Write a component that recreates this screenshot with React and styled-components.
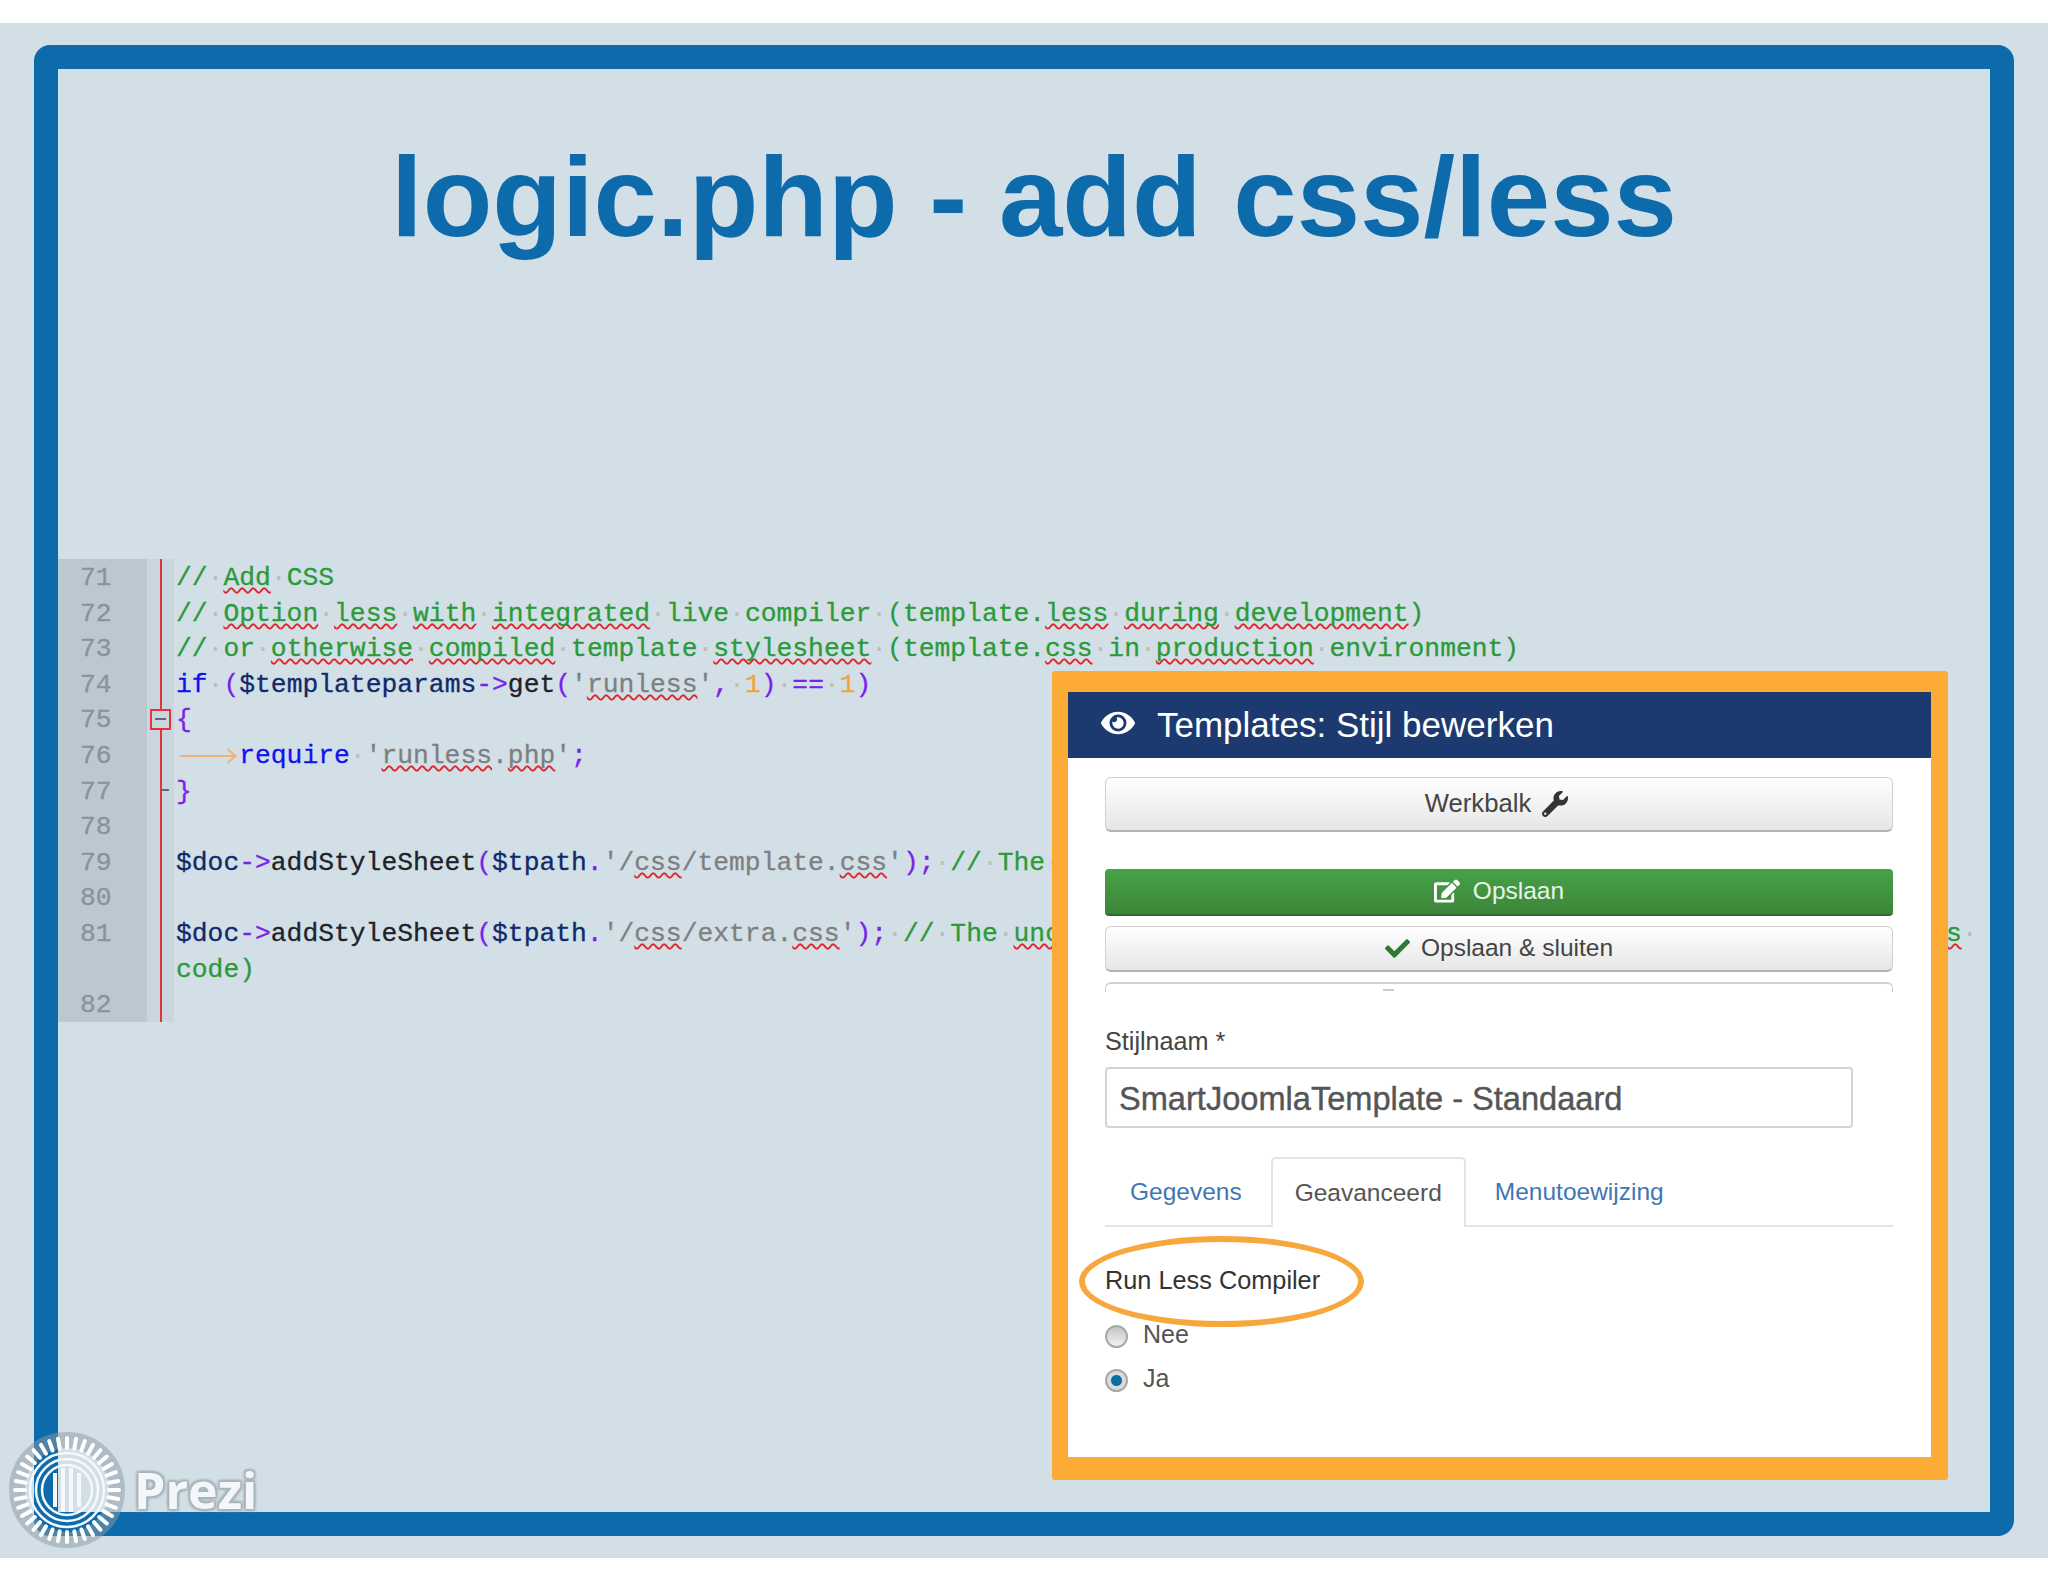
import styled, { createGlobalStyle } from "styled-components";
import { FaEye, FaWrench, FaEdit, FaCheck } from "react-icons/fa";

const Global = createGlobalStyle`
  html, body { margin: 0; padding: 0; background: #fff; }
  body { font-family: "Liberation Sans", Arial, sans-serif; }
`;

const Page = styled.div`
  width: 2048px;
  height: 1582px;
  padding-top: 23px;
  box-sizing: border-box;
`;
const Slide = styled.div`
  position: relative;
  height: 1535px;
  padding: 22px 34px;
  box-sizing: border-box;
  background: #d2dfe7;
`;
const Frame = styled.div`
  position: relative;
  height: 1491px;
  box-sizing: border-box;
  border: 24px solid #0e6bab;
  border-radius: 16px;
  display: flex;
  flex-direction: column;
`;
const TitleArea = styled.div`
  height: 490px;
  padding: 71px 0 0 20px;
  box-sizing: border-box;
  text-align: center;
`;
const Title = styled.h1`
  margin: 0;
  font-size: 114px;
  line-height: 1;
  font-weight: 700;
  color: #0e6bab;
`;

/* code editor */
const Code = styled.div`
  font-family: "Liberation Mono", "Courier New", monospace;
  font-size: 26.33px;
  line-height: 35.6px;
  -webkit-text-stroke: 0.3px currentColor;
`;
const Row = styled.div`
  display: flex;
  height: 35.6px;
  white-space: pre;
`;
const LineNo = styled.div`
  flex: 0 0 89px;
  padding: 2px 0 0 22px;
  box-sizing: border-box;
  background: #bcc8d0;
  color: #88939b;
`;
const Fold = styled.div`
  flex: 0 0 27px;
  display: flex;
  align-items: center;
  justify-content: flex-start;
  background: linear-gradient(90deg, #cad6de 13px, #e2343a 13px, #e2343a 15px, #cad6de 15px);
`;
const FoldBox = styled.div`
  width: 17px;
  height: 17px;
  margin-left: 3px;
  border: 2px solid #e2343a;
  display: flex;
  align-items: center;
  justify-content: center;
  background: #cad6de;
  &::before { content: ""; width: 11px; height: 2px; background: #667; }
`;
const FoldTick = styled.div`
  width: 7px;
  height: 2px;
  margin-left: 15px;
  background: #667;
`;
const Text = styled.div`
  padding: 2px 0 0 2px;
`;
const Part = styled.span`
  color: ${(p) => p.$color};
`;
const Typo = styled.span`
  text-decoration: underline wavy #e0262c;
  text-decoration-thickness: 1.5px;
  text-underline-offset: 2px;
  text-decoration-skip-ink: none;
`;
const Dot = styled.span`
  color: #bdbdb2;
  -webkit-text-stroke: 0;
`;
const TabArrow = styled.svg`
  width: 63.2px;
  height: 20px;
  vertical-align: -3px;
`;

/* overlaid screenshot */
const Panel = styled.div`
  position: absolute;
  left: 994px;
  top: 602px;
  width: 896px;
  height: 809px;
  box-sizing: border-box;
  border-style: solid;
  border-color: #fdab37;
  border-width: 21px 17px 23px 16px;
  border-radius: 3px;
  background: #fff;
  color: #444;
`;
const Header = styled.div`
  height: 66px;
  display: flex;
  align-items: center;
  gap: 22px;
  padding-left: 33px;
  background: #1d3a70;
  color: #fff;
  font-size: 35px;
  svg { margin-top: -4px; }
`;
const Body = styled.div`
  padding: 19px 38px 0 37px;
  display: flex;
  flex-direction: column;
`;
const Button = styled.div`
  height: ${(p) => p.$h}px;
  margin-bottom: ${(p) => p.$mb}px;
  padding-right: ${(p) => p.$pr || 0}px;
  padding-bottom: 1px;
  display: flex;
  align-items: center;
  justify-content: center;
  gap: ${(p) => p.$gap || 8}px;
  box-sizing: border-box;
  border: 1px solid #d0d0d0;
  border-bottom: 2px solid #b3b3b3;
  border-radius: 6px;
  background: linear-gradient(#fff, #e6e6e6);
  color: #444;
  font-size: ${(p) => p.$fs || 24.5}px;
`;
const GreenButton = styled(Button)`
  border: 0;
  border-bottom: 2px solid #2e6e2d;
  border-radius: 4px;
  background: linear-gradient(#48a248, #3b8539);
  color: #e9f3e9;
`;
const ClippedButton = styled.div`
  height: 10px;
  border: 1px solid #d0d0d0;
  border-bottom: 0;
  border-top-width: 2px;
  box-sizing: border-box;
  border-radius: 6px 6px 0 0;
  position: relative;
  &::after {
    content: "";
    position: absolute;
    left: 277px;
    top: 5px;
    width: 11px;
    height: 2px;
    background: #ccc;
  }
`;
const FieldLabel = styled.div`
  margin-top: 34px;
  height: 30px;
  line-height: 30px;
  font-size: 25.2px;
`;
const Input = styled.div`
  margin-top: 11px;
  width: 748px;
  height: 61px;
  box-sizing: border-box;
  padding: 2px 0 0 12px;
  display: flex;
  align-items: center;
  border: 2px solid #d4d4d4;
  border-radius: 4px;
  font-size: 32.6px;
  color: #555;
  -webkit-text-stroke: 0.4px currentColor;
`;
const Tabs = styled.div`
  margin-top: 29px;
  height: 70px;
  display: flex;
  gap: 4px;
  box-sizing: border-box;
  border-bottom: 2px solid #e4e4e4;
`;
const Tab = styled.div`
  height: ${(p) => (p.$active ? 70 : 68)}px;
  padding: 0 ${(p) => (p.$active ? 22 : 23)}px;
  display: flex;
  align-items: center;
  box-sizing: border-box;
  font-size: 24.5px;
  color: ${(p) => (p.$active ? "#555" : "#3f76b4")};
  background: ${(p) => (p.$active ? "#fff" : "transparent")};
  border: 2px solid ${(p) => (p.$active ? "#e4e4e4" : "transparent")};
  border-bottom: 0;
  border-radius: 5px 5px 0 0;
`;
const OptionLabel = styled.div`
  position: relative;
  margin-top: 35px;
  height: 36px;
  line-height: 36px;
  font-size: 25.3px;
  color: #333;
`;
const Ring = styled.div`
  position: absolute;
  left: -26px;
  top: -26px;
  width: 285px;
  height: 91px;
  box-sizing: border-box;
  border: 6px solid #f7a73c;
  border-radius: 50%;
`;
const Options = styled.div`
  margin-top: 18px;
  display: flex;
  flex-direction: column;
  gap: 8px;
`;
const Option = styled.div`
  height: 36px;
  display: flex;
  align-items: center;
  gap: 15px;
  font-size: 25px;
  color: #555;
`;
const Radio = styled.div`
  width: 23px;
  height: 23px;
  margin-top: 4px;
  box-sizing: border-box;
  border: 2px solid #a8a8a8;
  border-radius: 50%;
  background: ${(p) =>
    p.$on
      ? "radial-gradient(circle, #0a6fa5 0 5px, #dcdcdc 6px)"
      : "linear-gradient(#c4c4c4, #f2f2f2)"};
`;

/* prezi watermark */
const Watermark = styled.div`
  position: absolute;
  left: 9px;
  top: 1409px;
  display: flex;
  align-items: center;
  gap: 9px;
`;
const WatermarkText = styled.div`
  font-family: "Open Sans", sans-serif;
  font-weight: 700;
  font-size: 50px;
  line-height: 1;
  color: #f4f7f9;
  text-shadow: 0 0 3px #a9b4bc, 2px 2px 2px #a9b4bc, -2px -2px 2px #a9b4bc, 2px -2px 2px #a9b4bc, -2px 2px 2px #a9b4bc;
`;

const GREEN = "#2c9a3a";
const GRAY = "#7f7f7f";
const PURPLE = "#7a22e8";
const ORANGE = "#f5a33c";
const BLUE = "#1212f0";
const DARK = "#20222a";
const NAVY = "#102a6a";

const lines = [
  { no: 71, parts: [[GREEN, "// ~Add~ CSS"]] },
  { no: 72, parts: [[GREEN, "// ~Option~ ~less~ ~with~ ~integrated~ live compiler (template.~less~ ~during~ ~development~)"]] },
  { no: 73, parts: [[GREEN, "// or ~otherwise~ ~compiled~ template ~stylesheet~ (template.~css~ in ~production~ environment)"]] },
  {
    no: 74,
    parts: [
      [BLUE, "if"], [DARK, " "], [PURPLE, "("], [NAVY, "$templateparams"], [PURPLE, "->"], [DARK, "get"], [PURPLE, "("],
      [GRAY, "'~runless~'"], [PURPLE, ","], [DARK, " "], [ORANGE, "1"], [PURPLE, ")"], [DARK, " "], [PURPLE, "=="], [DARK, " "],
      [ORANGE, "1"], [PURPLE, ")"],
    ],
  },
  { no: 75, fold: "box", parts: [[PURPLE, "{"]] },
  { no: 76, tab: true, parts: [[BLUE, "require"], [DARK, " "], [GRAY, "'~runless~.~php~'"], [PURPLE, ";"]] },
  { no: 77, fold: "tick", parts: [[PURPLE, "}"]] },
  { no: 78, parts: [] },
  {
    no: 79,
    parts: [
      [NAVY, "$doc"], [PURPLE, "->"], [DARK, "addStyleSheet"], [PURPLE, "("], [NAVY, "$tpath"], [PURPLE, "."],
      [GRAY, "'/~css~/template.~css~'"], [PURPLE, ");"], [DARK, " "], [GREEN, "// The "],
    ],
  },
  { no: 80, parts: [] },
  {
    no: 81,
    parts: [
      [NAVY, "$doc"], [PURPLE, "->"], [DARK, "addStyleSheet"], [PURPLE, "("], [NAVY, "$tpath"], [PURPLE, "."],
      [GRAY, "'/~css~/extra.~css~'"], [PURPLE, ");"], [DARK, " "],
      [GREEN, "// The ~uncompiled~ extra stylesheet for adding in your own style ~css~ "],
    ],
  },
  { no: "", parts: [[GREEN, "code)"]] },
  { no: 82, parts: [] },
];

// spaces show as dots like in the editor, ~word~ gets the spell check underline
function renderText(text) {
  return text.split(/(~[^~]+~| )/).filter(Boolean).map((chunk, i) => {
    if (chunk === " ") return <Dot key={i}>·</Dot>;
    if (chunk[0] === "~") return <Typo key={i}>{chunk.slice(1, -1)}</Typo>;
    return chunk;
  });
}

function PreziMark() {
  const dashes = [];
  for (let i = 0; i < 36; i++) dashes.push(i * 10);
  return (
    <svg width="116" height="116" viewBox="0 0 116 116">
      <circle cx="58" cy="58" r="50" fill="none" stroke="#8d99a3" strokeOpacity="0.5" strokeWidth="16" />
      {dashes.map((a) => (
        <line key={a} x1="58" y1="6" x2="58" y2="16" stroke="#fff" strokeWidth="4" strokeLinecap="round" transform={`rotate(${a} 58 58)`} />
      ))}
      <g fill="none" stroke="#f6f9fb" strokeWidth="2.5">
        <circle cx="58" cy="58" r="37" />
        <circle cx="58" cy="58" r="31" />
        <circle cx="58" cy="58" r="25" />
      </g>
      <g stroke="#f6f9fb" strokeWidth="4">
        <line x1="46" y1="41" x2="46" y2="75" />
        <line x1="54" y1="36" x2="54" y2="80" />
        <line x1="62" y1="36" x2="62" y2="80" />
        <line x1="70" y1="41" x2="70" y2="75" />
      </g>
    </svg>
  );
}

export default function App() {
  return (
    <Page>
      <Global />
      <Slide>
        <Frame>
          <TitleArea>
            <Title>logic.php - add css/less</Title>
          </TitleArea>
          <Code>
            {lines.map((line, i) => (
              <Row key={i}>
                <LineNo>{line.no}</LineNo>
                <Fold>
                  {line.fold === "box" && <FoldBox />}
                  {line.fold === "tick" && <FoldTick />}
                </Fold>
                <Text>
                  {line.tab && (
                    <TabArrow viewBox="0 0 62 20">
                      <path d="M3 10H58M51 3L59 10L51 17" fill="none" stroke="#eeb27a" strokeWidth="2" />
                    </TabArrow>
                  )}
                  {line.parts.map(([color, text], j) => (
                    <Part key={j} $color={color}>{renderText(text)}</Part>
                  ))}
                </Text>
              </Row>
            ))}
          </Code>
          <Panel>
            <Header>
              <FaEye size={34} />
              <span>Templates: Stijl bewerken</span>
            </Header>
            <Body>
              <Button $h={55} $mb={37} $fs={25.7} $gap={11} $pr={5}>
                Werkbalk <FaWrench size={26} color="#333" />
              </Button>
              <GreenButton $h={47} $mb={10} $gap={13}>
                <FaEdit size={26} color="#fff" /> Opslaan
              </GreenButton>
              <Button $h={46} $mb={10} $gap={11}>
                <FaCheck size={25} color="#2b7a35" /> Opslaan &amp; sluiten
              </Button>
              <ClippedButton />
              <FieldLabel>Stijlnaam *</FieldLabel>
              <Input>SmartJoomlaTemplate - Standaard</Input>
              <Tabs>
                <Tab>Gegevens</Tab>
                <Tab $active>Geavanceerd</Tab>
                <Tab>Menutoewijzing</Tab>
              </Tabs>
              <OptionLabel>
                Run Less Compiler
                <Ring />
              </OptionLabel>
              <Options>
                <Option><Radio />Nee</Option>
                <Option><Radio $on />Ja</Option>
              </Options>
            </Body>
          </Panel>
        </Frame>
        <Watermark>
          <PreziMark />
          <WatermarkText>Prezi</WatermarkText>
        </Watermark>
      </Slide>
    </Page>
  );
}
